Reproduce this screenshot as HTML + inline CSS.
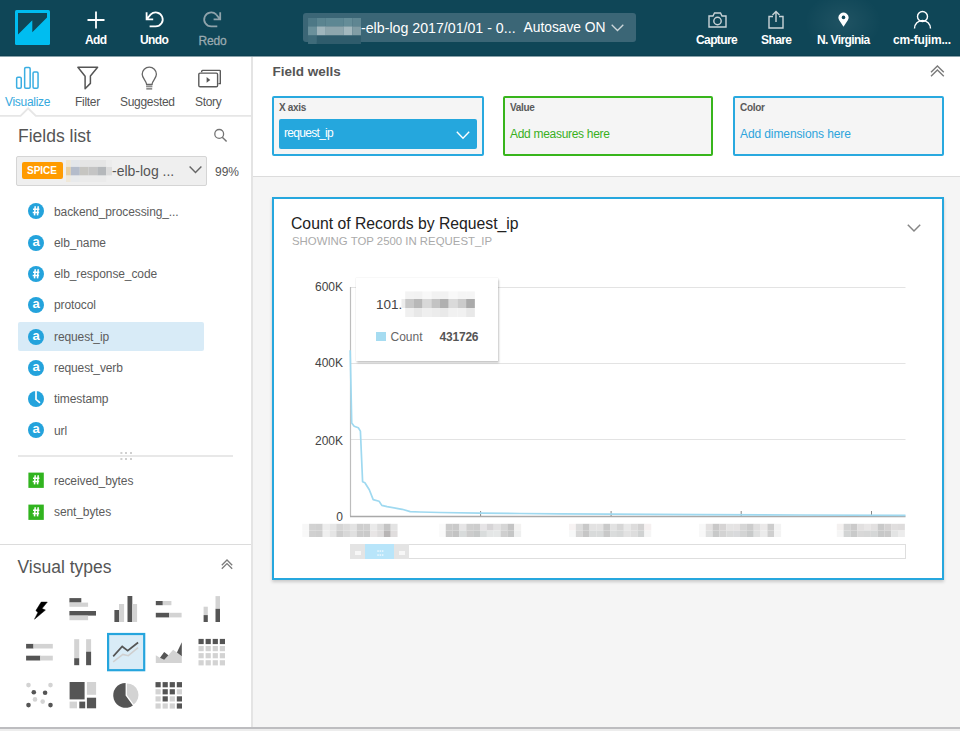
<!DOCTYPE html>
<html><head><meta charset="utf-8">
<style>
*{margin:0;padding:0;box-sizing:border-box}
html,body{width:960px;height:731px;overflow:hidden;background:#f5f5f5;font-family:"Liberation Sans",sans-serif;position:relative}
.a{position:absolute}
.t{position:absolute;white-space:nowrap;line-height:1}
#hdr{left:0;top:0;width:960px;height:56px;background:#0f4657;border-bottom:1px solid #0c4051;box-shadow:0 1px 0 #88a2aa}
.hl{color:#fff;font-weight:bold;font-size:12px;letter-spacing:-0.6px}
#left{left:0;top:57px;width:251px;height:670px;background:#fff}
#lborder{left:251px;top:57px;width:2px;height:670px;background:#e4e4e4}
.tab{color:#555;font-size:12px;letter-spacing:-0.3px}
.fi{left:28px;width:16px;height:16px;border-radius:50%;background:#24a3dc;color:#fff;font-weight:bold;font-size:13px;text-align:center;line-height:14.5px}
.fl{left:54px;color:#5c5c5c;font-size:12px;letter-spacing:-0.1px}
.gi{left:28px;width:16px;height:16px;background:#2cb52a;color:#fff;font-weight:bold;font-size:13px;text-align:center;line-height:14.5px}
#fw{left:253px;top:57px;width:707px;height:120px;background:#fff;border-bottom:1px solid #dcdcdc}
.well{top:96px;height:60px;border:2px solid #29a9df;border-radius:2px;background:#f5f5f5}
.wl{color:#5a5a5a;font-weight:bold;font-size:10px;letter-spacing:-0.3px}
#card{left:272px;top:197px;width:672px;height:383px;background:#fff;border:2px solid #26a7de;box-shadow:0 2px 3px rgba(0,0,0,0.18)}
.ax{color:#444;font-size:12px;text-align:right}
#bot1{left:0;top:727px;width:960px;height:2px;background:#bdbdc0}
#bot2{left:0;top:729px;width:960px;height:2px;background:#ededed}
</style></head><body>
<!-- HEADER -->
<div id="hdr" class="a"></div>
<div class="a" style="left:805px;top:0;width:80px;height:55px;background:radial-gradient(ellipse 38px 30px at 38px 22px,rgba(255,255,255,0.07),rgba(255,255,255,0))"></div>
<svg class="a" style="left:15px;top:10px" width="35" height="35" viewBox="0 0 35 35">
 <rect x="0" y="0" width="35" height="35" rx="1.5" fill="#00bdf0"/>
 <path d="M3 3 H32 V7.5 L17.3 22.3 V10.2 L3 24.5 Z" fill="#0f4657"/>
</svg>
<svg class="a" style="left:87px;top:11px" width="18" height="18" viewBox="0 0 18 18"><path d="M9 0.5V17.5M0.5 9H17.5" stroke="#fff" stroke-width="1.8"/></svg>
<div class="t hl" style="left:85px;top:34px">Add</div>
<svg class="a" style="left:140px;top:6px" width="30" height="26" viewBox="0 0 30 26"><path d="M10.75 8.45 A7 7 0 1 1 15.7 20.4 H9.6 M6.6 6.2 V13.4 H13.2 M6.6 13.4 L10.75 8.45" fill="none" stroke="#fff" stroke-width="1.8"/></svg>
<div class="t hl" style="left:140px;top:34px">Undo</div>
<svg class="a" style="left:198px;top:6px" width="30" height="26" viewBox="0 0 30 26"><path d="M18.15 8.45 A7 7 0 1 0 13.2 20.4 H19.3 M22.2 6.2 V13.4 H15.6 M22.2 13.4 L18.15 8.45" fill="none" stroke="#8fa3ab" stroke-width="1.8"/></svg>
<div class="t" style="left:198.5px;top:34.5px;color:#9aaab0;font-size:12px;-webkit-text-stroke:0.3px #9aaab0;letter-spacing:-0.2px">Redo</div>

<div class="a" style="left:303.3px;top:13px;width:332.4px;height:28.6px;border-radius:3px;background:#3b6676"></div>
<svg class="a" style="left:307.7px;top:17.7px" width="53.2" height="26.2" viewBox="0 0 53.2 26.2">
 <g><rect x="0" y="0" width="8.9" height="8.4" fill="#4d7886"/><rect x="8.9" y="0" width="8.9" height="8.4" fill="#5a8490"/><rect x="17.8" y="0" width="17.6" height="8.4" fill="#5d8793"/><rect x="35.4" y="0" width="8.9" height="8.4" fill="#658d98"/><rect x="44.3" y="0" width="8.9" height="8.4" fill="#5f8692"/>
 <rect x="0" y="8.4" width="8.9" height="9.1" fill="#6a909b"/><rect x="8.9" y="8.4" width="8.9" height="9.1" fill="#9fb5bc"/><rect x="17.8" y="8.4" width="17.6" height="9.1" fill="#8ea6ad"/><rect x="35.4" y="8.4" width="8.9" height="9.1" fill="#a3b8be"/><rect x="44.3" y="8.4" width="8.9" height="9.1" fill="#819da5"/>
 <rect x="0" y="17.5" width="8.9" height="8.7" fill="#3f6b7a"/><rect x="8.9" y="17.5" width="44.3" height="8.7" fill="#2f5c6c"/></g></svg>
<div class="t" style="left:361px;top:21px;color:#fff;font-size:14.2px">-elb-log 2017/01/01 - 0...</div><div class="t" style="left:523.5px;top:21px;color:#fff;font-size:13.8px">Autosave ON</div>
<svg class="a" style="left:610.6px;top:24px" width="13" height="8" viewBox="0 0 13 8"><path d="M0.7 0.7 L6.5 6.5 L12.3 0.7" fill="none" stroke="#cdd7da" stroke-width="1.3"/></svg>

<svg class="a" style="left:708px;top:12px" width="19" height="16" viewBox="0 0 19 16"><path d="M1 4 H5 L6.5 1 H12.5 L14 4 H18 V15 H1 Z" fill="none" stroke="#c9d3d7" stroke-width="1.4"/><circle cx="9.5" cy="9" r="3.7" fill="none" stroke="#c9d3d7" stroke-width="1.4"/></svg>
<div class="t hl" style="left:696px;top:34px">Capture</div>
<svg class="a" style="left:768px;top:10px" width="16" height="19" viewBox="0 0 16 19"><path d="M5 6.5 H1 V18 H15 V6.5 H11" fill="none" stroke="#c9d3d7" stroke-width="1.4"/><path d="M8 1.5 V12 M4.5 5 L8 1.5 L11.5 5" fill="none" stroke="#c9d3d7" stroke-width="1.4"/></svg>
<div class="t hl" style="left:761px;top:34px">Share</div>
<svg class="a" style="left:838px;top:12px" width="11" height="15" viewBox="0 0 11 15"><path d="M5.5 14.8 L1.2 8.2 A5 5 0 1 1 9.8 8.2 Z" fill="#fff"/><circle cx="5.5" cy="5.4" r="1.8" fill="#0f4657"/></svg>
<div class="t hl" style="left:817px;top:34px">N. Virginia</div>
<svg class="a" style="left:913px;top:10px" width="19" height="19" viewBox="0 0 19 19"><circle cx="9.5" cy="6.5" r="5" fill="none" stroke="#fff" stroke-width="1.4"/><path d="M1.5 18.5 A8 8 0 0 1 17.5 18.5" fill="none" stroke="#fff" stroke-width="1.4"/></svg>
<div class="t hl" style="left:893px;top:34px;letter-spacing:-0.2px">cm-fujim...</div>

<!-- LEFT PANEL -->
<div id="left" class="a"></div>
<div id="lborder" class="a"></div>
<svg class="a" style="left:15px;top:66px" width="26" height="24" viewBox="0 0 26 24"><g fill="none" stroke="#3aaee2" stroke-width="1.5"><rect x="1.65" y="11.25" width="4.6" height="11" rx="1.2"/><rect x="9.65" y="1.45" width="5.5" height="20.8" rx="1.2"/><rect x="18.05" y="5.95" width="5" height="16.3" rx="1.2"/></g></svg>
<div class="t tab" style="left:5px;top:96px;color:#35a8dd">Visualize</div>
<svg class="a" style="left:77px;top:66px" width="22" height="25" viewBox="0 0 22 25"><path d="M0.9 1.3 H20.6 L13.4 10 V17.4 L8.1 22.8 V10.2 Z" fill="none" stroke="#555" stroke-width="1.5" stroke-linejoin="round"/></svg>
<div class="t tab" style="left:75px;top:96px">Filter</div>
<svg class="a" style="left:141px;top:66px" width="17" height="25" viewBox="0 0 17 25"><path d="M5.6 18.3 C5.1 14.6 1.2 12 1.2 8.2 A7.1 7.1 0 0 1 15.4 8.2 C15.4 12 11.5 14.6 11 18.3 Z" fill="none" stroke="#666" stroke-width="1.3" stroke-linejoin="round"/><path d="M5.1 18.9 H11.4 M5.1 20.8 H11.4 M5.3 22.9 H11.2" stroke="#666" stroke-width="1.1"/></svg>
<div class="t tab" style="left:120px;top:96px">Suggested</div>
<svg class="a" style="left:197px;top:69px" width="25" height="20" viewBox="0 0 25 20"><rect x="1.8" y="4.1" width="18.8" height="13.6" rx="1.3" fill="none" stroke="#5a5a5a" stroke-width="1.4"/><path d="M4.7 3.3 V2.2 Q4.7 1.4 5.5 1.4 H22.6 Q23.3 1.4 23.3 2.1 V14.6 H21.4" fill="none" stroke="#5a5a5a" stroke-width="1.4"/><path d="M9.6 8 L13.3 10.9 L9.6 13.8 Z" fill="#555"/></svg>
<div class="t tab" style="left:195px;top:96px">Story</div>
<!-- tab line with notch -->
<svg class="a" style="left:0;top:106px" width="251" height="11" viewBox="0 0 251 11"><path d="M0 9.9 H20.6 L28.1 2.4 L35.8 9.9 H251" fill="none" stroke="#e6e6e6" stroke-width="1.9"/></svg>

<div class="t" style="left:18px;top:128px;color:#555;font-size:17.5px">Fields list</div>
<svg class="a" style="left:213px;top:128px" width="16" height="16" viewBox="0 0 16 16"><circle cx="6.2" cy="5.9" r="4.4" fill="none" stroke="#747474" stroke-width="1.3"/><path d="M9.3 9.2 L13.6 13.5" stroke="#747474" stroke-width="1.5"/></svg>

<div class="a" style="left:16px;top:155.5px;width:191px;height:30px;background:#efefef;border:1px solid #d5d5d5;border-radius:2px"></div>
<div class="a" style="left:22px;top:161.5px;width:41px;height:17.5px;background:#ff9b00;border-radius:2px"></div>
<div class="t" style="left:27px;top:166px;color:#fff;font-weight:bold;font-size:10px">SPICE</div>
<svg class="a" style="left:65.6px;top:160.3px" width="46.3" height="22.2" viewBox="0 0 46.3 22.2">
 <rect x="0" y="0" width="4.7" height="6.9" fill="#f0e6d0"/><rect x="4.7" y="0" width="9.1" height="6.9" fill="#e3e6ea"/><rect x="13.8" y="0" width="26.5" height="6.9" fill="#e5e5e5"/><rect x="40.3" y="0" width="6" height="6.9" fill="#ececec"/>
 <rect x="0" y="6.9" width="4.7" height="8.7" fill="#e8cfa0"/><rect x="4.7" y="6.9" width="9.1" height="8.7" fill="#b4bccb"/><rect x="13.8" y="6.9" width="8.7" height="8.7" fill="#c6c5c1"/><rect x="22.5" y="6.9" width="8.8" height="8.7" fill="#c4c4c4"/><rect x="31.3" y="6.9" width="9" height="8.7" fill="#b5b8bb"/><rect x="40.3" y="6.9" width="6" height="8.7" fill="#dcdcdc"/>
 <rect x="0" y="15.6" width="4.7" height="6.6" fill="#f0e8d8"/><rect x="4.7" y="15.6" width="9.1" height="6.6" fill="#e8eaec"/><rect x="13.8" y="15.6" width="26.5" height="6.6" fill="#ebebeb"/><rect x="40.3" y="15.6" width="6" height="6.6" fill="#efefef"/>
</svg>
<div class="t" style="left:112px;top:164px;color:#555;font-size:14px">-elb-log ...</div>
<svg class="a" style="left:189px;top:166px" width="13" height="8" viewBox="0 0 13 8"><path d="M0.6 0.6 L6.5 6.6 L12.4 0.6" fill="none" stroke="#666" stroke-width="1.4"/></svg>
<div class="t" style="left:215px;top:166px;color:#555;font-size:12px">99%</div>

<!-- fields -->
<svg class="a" style="left:28px;top:203px" width="16" height="16" viewBox="0 0 16 16"><circle cx="8" cy="8" r="8" fill="#24a3dc"/><path d="M7.2 3.2 L6.5 12.4 M10.2 3.2 L9.5 12.4 M5 6.3 H11.4 M4.7 9.4 H11.1" stroke="#fff" stroke-width="1.55" fill="none"/></svg><div class="t fl" style="top:206px">backend_processing_...</div>
<div class="t fi" style="top:234.5px">a</div><div class="t fl" style="top:237px">elb_name</div>
<svg class="a" style="left:28px;top:266px" width="16" height="16" viewBox="0 0 16 16"><circle cx="8" cy="8" r="8" fill="#24a3dc"/><path d="M7.2 3.2 L6.5 12.4 M10.2 3.2 L9.5 12.4 M5 6.3 H11.4 M4.7 9.4 H11.1" stroke="#fff" stroke-width="1.55" fill="none"/></svg><div class="t fl" style="top:268px">elb_response_code</div>
<div class="t fi" style="top:297px">a</div><div class="t fl" style="top:299px">protocol</div>
<div class="a" style="left:18px;top:322px;width:186px;height:29px;background:#d8ebf7;border-radius:2px"></div>
<div class="t fi" style="top:328.5px">a</div><div class="t fl" style="top:331px">request_ip</div>
<div class="t fi" style="top:359.5px">a</div><div class="t fl" style="top:362px">request_verb</div>
<svg class="a" style="left:28px;top:391px" width="16" height="16" viewBox="0 0 16 16"><circle cx="8" cy="8" r="8" fill="#24a3dc"/><path d="M8 0 V8.3 L12 11.8" fill="none" stroke="#fff" stroke-width="1.7"/></svg>
<div class="t fl" style="top:393px">timestamp</div>
<div class="t fi" style="top:422px">a</div><div class="t fl" style="top:425px">url</div>
<div class="a" style="left:18px;top:455px;width:215px;height:2px;background:#e8e8e8"></div>
<svg class="a" style="left:119px;top:451px" width="14" height="10" viewBox="0 0 14 10"><rect x="1.4" y="1" width="2" height="2" fill="#cfcfcf"/><rect x="1.4" y="7" width="2" height="2" fill="#cfcfcf"/><rect x="6" y="1" width="2" height="2" fill="#cfcfcf"/><rect x="6" y="7" width="2" height="2" fill="#cfcfcf"/><rect x="11" y="1" width="2" height="2" fill="#cfcfcf"/><rect x="11" y="7" width="2" height="2" fill="#cfcfcf"/></svg>
<svg class="a" style="left:28px;top:472px" width="16" height="16" viewBox="0 0 16 16"><rect x="0.4" y="0.6" width="15.4" height="15.3" fill="#31b41f"/><path d="M7.2 3.2 L6.5 12.4 M10.2 3.2 L9.5 12.4 M5 6.3 H11.4 M4.7 9.4 H11.1" stroke="#fff" stroke-width="1.55" fill="none"/></svg><div class="t fl" style="top:475px">received_bytes</div>
<svg class="a" style="left:28px;top:503.5px" width="16" height="16" viewBox="0 0 16 16"><rect x="0.4" y="0.6" width="15.4" height="15.3" fill="#31b41f"/><path d="M7.2 3.2 L6.5 12.4 M10.2 3.2 L9.5 12.4 M5 6.3 H11.4 M4.7 9.4 H11.1" stroke="#fff" stroke-width="1.55" fill="none"/></svg><div class="t fl" style="top:506px">sent_bytes</div>

<div class="a" style="left:0;top:544px;width:251px;height:1px;background:#dcdcdc"></div>
<div class="t" style="left:17.5px;top:559px;color:#555;font-size:17.5px">Visual types</div>
<svg class="a" style="left:221px;top:559px" width="13" height="11" viewBox="0 0 13 11"><path d="M0.8 6.2 L6 1 L11.2 6.2 M0.8 9.8 L6 4.6 L11.2 9.8" fill="none" stroke="#7a7a7a" stroke-width="1.3"/></svg>

<!-- visual type icons -->
<svg class="a" style="left:0;top:590px" width="251" height="130" viewBox="0 590 251 130">
 <!-- row1 -->
 <path d="M41.2 602.1 H47.3 L42 608.6 L45.4 610.1 L34.5 619.2 L37.9 612.4 L35.9 610.6 Z" fill="#000" stroke="#000" stroke-width="0.5" stroke-linejoin="round"/>
 <rect x="69.4" y="598.1" width="11.9" height="4.4" fill="#555"/>
 <rect x="69.4" y="602.6" width="18.7" height="4.2" fill="#d3d3d3"/>
 <rect x="69.4" y="611" width="26.6" height="4.6" fill="#555"/>
 <rect x="69.4" y="615.6" width="18.7" height="4.6" fill="#d3d3d3"/>
 <rect x="114.4" y="610" width="4.6" height="12" fill="#555"/>
 <rect x="119" y="604" width="5.1" height="18" fill="#d3d3d3"/>
 <rect x="127.5" y="596" width="4.8" height="26" fill="#555"/>
 <rect x="132.3" y="604" width="4.8" height="18" fill="#d3d3d3"/>
 <rect x="155.8" y="601" width="7" height="4.2" fill="#555"/>
 <rect x="162.8" y="601" width="8.6" height="4.2" fill="#d3d3d3"/>
 <rect x="155.8" y="612.8" width="13.4" height="4.6" fill="#555"/>
 <rect x="169.2" y="612.8" width="12.4" height="4.6" fill="#d3d3d3"/>
 <rect x="203.6" y="606.7" width="4.2" height="8.4" fill="#d3d3d3"/>
 <rect x="203.6" y="615.1" width="4.2" height="6.9" fill="#555"/>
 <rect x="215.5" y="596.1" width="4.5" height="12.7" fill="#d3d3d3"/>
 <rect x="215.5" y="608.8" width="4.5" height="13.2" fill="#555"/>
 <!-- row2 -->
 <rect x="26.1" y="643.9" width="7.4" height="4.6" fill="#555"/>
 <rect x="33.5" y="643.9" width="19.3" height="4.6" fill="#d3d3d3"/>
 <rect x="26.1" y="655.7" width="14.2" height="4.8" fill="#555"/>
 <rect x="40.3" y="655.7" width="12.5" height="4.8" fill="#d3d3d3"/>
 <rect x="74.2" y="639.2" width="5" height="19" fill="#d3d3d3"/>
 <rect x="74.2" y="658.2" width="5" height="7" fill="#555"/>
 <rect x="86.1" y="639.2" width="5" height="12.5" fill="#d3d3d3"/>
 <rect x="86.1" y="651.7" width="5" height="13.5" fill="#555"/>
 <rect x="108.1" y="634" width="36.1" height="36.2" fill="#d9ecf7" stroke="#25a5dd" stroke-width="2.2"/>
 <path d="M113.2 661.8 L122.9 654.4 L128.3 655.7 L138.1 647.6" fill="none" stroke="#cfcfcf" stroke-width="1.5"/>
 <path d="M113.2 656.4 L122.2 646.5 L127.7 650.6 L138.1 642.5" fill="none" stroke="#555" stroke-width="1.7"/>
 <path d="M155.8 663 V655.3 L160 657.7 L168.4 655.3 L173.1 649.7 L176.9 652.5 L181.8 656.3 V663 Z" fill="#d3d3d3"/>
 <path d="M160 657.7 L164.2 652 L168.4 655.3 L164.2 659.8 Z" fill="#555"/>
 <path d="M176.9 652.5 L181.8 642.2 V656.3 Z" fill="#555"/>
 <rect x="198.50" y="638.90" width="5.2" height="5.2" fill="#555"/><rect x="205.60" y="638.90" width="5.2" height="5.2" fill="#555"/><rect x="212.70" y="638.90" width="5.2" height="5.2" fill="#555"/><rect x="219.80" y="638.90" width="5.2" height="5.2" fill="#555"/><rect x="198.50" y="646.00" width="5.2" height="5.2" fill="#d3d3d3"/><rect x="205.60" y="646.00" width="5.2" height="5.2" fill="#d3d3d3"/><rect x="212.70" y="646.00" width="5.2" height="5.2" fill="#d3d3d3"/><rect x="219.80" y="646.00" width="5.2" height="5.2" fill="#d3d3d3"/><rect x="198.50" y="653.10" width="5.2" height="5.2" fill="#d3d3d3"/><rect x="205.60" y="653.10" width="5.2" height="5.2" fill="#d3d3d3"/><rect x="212.70" y="653.10" width="5.2" height="5.2" fill="#d3d3d3"/><rect x="219.80" y="653.10" width="5.2" height="5.2" fill="#d3d3d3"/><rect x="198.50" y="660.20" width="5.2" height="5.2" fill="#d3d3d3"/><rect x="205.60" y="660.20" width="5.2" height="5.2" fill="#d3d3d3"/><rect x="212.70" y="660.20" width="5.2" height="5.2" fill="#d3d3d3"/><rect x="219.80" y="660.20" width="5.2" height="5.2" fill="#d3d3d3"/>
 <!-- row3 -->
 <g fill="#d3d3d3"><circle cx="28.5" cy="685.1" r="2.3"/><circle cx="50.5" cy="685.1" r="2.3"/><circle cx="35" cy="699.4" r="2.3"/><circle cx="42.7" cy="701.6" r="2.3"/></g>
 <g fill="#555"><circle cx="33.8" cy="692.2" r="2.3"/><circle cx="45.1" cy="692.7" r="2.3"/><circle cx="28.5" cy="705.1" r="2.3"/><circle cx="50.5" cy="705.1" r="2.3"/></g>
 <rect x="69.6" y="682" width="15" height="17.4" fill="#555"/>
 <rect x="86.9" y="682" width="9.2" height="12.8" fill="#d3d3d3"/>
 <rect x="86.9" y="697.7" width="9.2" height="10.6" fill="#555"/>
 <rect x="69.6" y="701.6" width="7.4" height="6.7" fill="#d3d3d3"/>
 <rect x="79.3" y="701.6" width="5.9" height="6.7" fill="#555"/>
 <path d="M125.6 695.4 L132.89 705.43 A12.4 12.4 0 1 1 125.6 683.00 Z" fill="#555"/>
 <path d="M126.90 695.00 L126.90 683.40 A11.6 11.6 0 0 1 133.72 704.38 Z" fill="#d3d3d3"/>
 <g id="hm"></g>
</svg>
<svg class="a" style="left:155px;top:681.8px" width="28" height="28" viewBox="0 0 28 28"><rect x="0.50" y="0.10" width="5.2" height="5.2" fill="#555"/><rect x="7.60" y="0.10" width="5.2" height="5.2" fill="#555"/><rect x="14.70" y="0.10" width="5.2" height="5.2" fill="#555"/><rect x="21.80" y="0.10" width="5.2" height="5.2" fill="#555"/><rect x="0.50" y="7.20" width="5.2" height="5.2" fill="#d3d3d3"/><rect x="7.60" y="7.20" width="5.2" height="5.2" fill="#555"/><rect x="14.70" y="7.20" width="5.2" height="5.2" fill="#555"/><rect x="21.80" y="7.20" width="5.2" height="5.2" fill="#d3d3d3"/><rect x="0.50" y="14.30" width="5.2" height="5.2" fill="#d3d3d3"/><rect x="7.60" y="14.30" width="5.2" height="5.2" fill="#555"/><rect x="14.70" y="14.30" width="5.2" height="5.2" fill="#d3d3d3"/><rect x="21.80" y="14.30" width="5.2" height="5.2" fill="#555"/><rect x="0.50" y="21.40" width="5.2" height="5.2" fill="#d3d3d3"/><rect x="7.60" y="21.40" width="5.2" height="5.2" fill="#d3d3d3"/><rect x="14.70" y="21.40" width="5.2" height="5.2" fill="#d3d3d3"/><rect x="21.80" y="21.40" width="5.2" height="5.2" fill="#555"/></svg>

<!-- FIELD WELLS -->
<div id="fw" class="a"></div>
<div class="t" style="left:272.5px;top:65px;color:#555;font-weight:bold;font-size:13.5px">Field wells</div>
<svg class="a" style="left:930px;top:65px" width="15" height="12" viewBox="0 0 15 12"><path d="M1 7.2 L7.4 1 L13.8 7.2 M1 11.2 L7.4 5 L13.8 11.2" fill="none" stroke="#7a7a7a" stroke-width="1.4"/></svg>
<div class="a well" style="left:272px;width:211.5px"></div>
<div class="t wl" style="left:279px;top:103px">X axis</div>
<div class="a" style="left:279px;top:119px;width:198px;height:30px;background:#25a7dd;border-radius:2px"></div>
<div class="t" style="left:284px;top:127.3px;color:#fff;font-size:12px;letter-spacing:-0.7px">request_ip</div>
<svg class="a" style="left:456px;top:131px" width="14" height="9" viewBox="0 0 14 9"><path d="M0.8 0.8 L7 7.2 L13.2 0.8" fill="none" stroke="#fff" stroke-width="1.4"/></svg>
<div class="a well" style="left:503px;width:210px;border-color:#38b51c"></div>
<div class="t wl" style="left:510px;top:103px">Value</div>
<div class="t" style="left:510px;top:128px;color:#38b01d;font-size:12px;letter-spacing:-0.3px">Add measures here</div>
<div class="a well" style="left:733px;width:211px"></div>
<div class="t wl" style="left:740px;top:103px">Color</div>
<div class="t" style="left:740px;top:128px;color:#2da4dc;font-size:12px;letter-spacing:-0.1px">Add dimensions here</div>

<!-- CHART CARD -->
<div id="card" class="a"></div>
<div class="t" style="left:291px;top:216px;color:#222;font-size:15.75px">Count of Records by Request_ip</div>
<div class="t" style="left:292px;top:236px;color:#aaa;font-size:11.4px">SHOWING TOP 2500 IN REQUEST_IP</div>
<svg class="a" style="left:906.7px;top:223.5px" width="14" height="9" viewBox="0 0 14 9"><path d="M0.8 0.8 L7 7 L13.2 0.8" fill="none" stroke="#858585" stroke-width="1.5"/></svg>

<svg class="a" style="left:272px;top:197px" width="672" height="383" viewBox="272 197 672 383">
 <g stroke="#e3e3e3" stroke-width="1"><path d="M351 287.5 H905.5 M351 363.5 H905.5 M351 439.5 H905.5"/></g>
 <path d="M350.5 287 V516" stroke="#bdbdbd" stroke-width="1.2"/>
 <path d="M350 516.5 H905.5" stroke="#a9a9a9" stroke-width="1.4"/>
 <g stroke="#888" stroke-width="1"><path d="M480.6 511 V516 M611.1 511 V516 M741.2 511 V516 M871.5 511 V516"/></g>
 <path d="M350.2 350.2 L351.7 422.9 L354.2 426.2 L358.3 427.8 L360.4 431.1 L362.6 481.8 L364.9 482.7 L369.3 489.8 L373.2 499.6 L379.1 501.3 L381.8 505.4 L387.1 506.7 L402.2 509.3 L410.2 511.6 L420 512 L440 512.5 L480 513.2 L520 513.5 L560 513.8 L611 514.2 L700 514.6 L800 515 L905.5 515.3" fill="none" stroke="#9fd9f0" stroke-width="1.7" stroke-linejoin="round"/>
</svg>
<div class="t ax" style="left:300px;top:281px;width:43px">600K</div>
<div class="t ax" style="left:300px;top:357px;width:43px">400K</div>
<div class="t ax" style="left:300px;top:435px;width:43px">200K</div>
<div class="t ax" style="left:300px;top:511px;width:43px">0</div>

<!-- tooltip -->
<div class="a" style="left:356px;top:278px;width:142px;height:83px;background:#fff;box-shadow:0 0 1px rgba(0,0,0,0.18),1px 1.5px 2px rgba(0,0,0,0.2)"></div>
<div class="t" style="left:376px;top:298px;color:#444;font-size:13.5px">101.</div>
<svg class="a" style="left:400px;top:290px" width="82" height="28" viewBox="400 290 82 28"><rect x="401.5" y="299" width="3.7" height="9" fill="#ececec"/><rect x="405.20" y="291.4" width="8.75" height="7.6" fill="#f3f3f3"/><rect x="405.20" y="299" width="8.75" height="9" fill="#c8c8c8"/><rect x="405.20" y="308" width="8.75" height="9" fill="#f0f0f0"/><rect x="413.90" y="291.4" width="8.75" height="7.6" fill="#f2f2f2"/><rect x="413.90" y="299" width="8.75" height="9" fill="#b8b8b8"/><rect x="413.90" y="308" width="8.75" height="9" fill="#e8e8e8"/><rect x="422.60" y="291.4" width="8.75" height="7.6" fill="#f8f8f8"/><rect x="422.60" y="299" width="8.75" height="9" fill="#d8d8d8"/><rect x="422.60" y="308" width="8.75" height="9" fill="#efefef"/><rect x="431.30" y="291.4" width="8.75" height="7.6" fill="#f2f2f2"/><rect x="431.30" y="299" width="8.75" height="9" fill="#c3c3c3"/><rect x="431.30" y="308" width="8.75" height="9" fill="#ececec"/><rect x="440.00" y="291.4" width="8.75" height="7.6" fill="#f2f2f2"/><rect x="440.00" y="299" width="8.75" height="9" fill="#b0b0b0"/><rect x="440.00" y="308" width="8.75" height="9" fill="#e9e9e9"/><rect x="448.70" y="291.4" width="8.75" height="7.6" fill="#f9f9f9"/><rect x="448.70" y="299" width="8.75" height="9" fill="#dadada"/><rect x="448.70" y="308" width="8.75" height="9" fill="#f1f1f1"/><rect x="457.40" y="291.4" width="8.75" height="7.6" fill="#f5f5f5"/><rect x="457.40" y="299" width="8.75" height="9" fill="#cbcbcb"/><rect x="457.40" y="308" width="8.75" height="9" fill="#f1f1f1"/><rect x="466.10" y="291.4" width="8.75" height="7.6" fill="#f5f5f5"/><rect x="466.10" y="299" width="8.75" height="9" fill="#aaaaaa"/><rect x="466.10" y="308" width="8.75" height="9" fill="#e8e8e8"/></svg>
<div class="a" style="left:376px;top:331.5px;width:9.5px;height:9px;background:#a6dcf1"></div>
<div class="t" style="left:390.5px;top:331px;color:#666;font-size:12px">Count</div>
<div class="t" style="left:439.5px;top:331px;color:#555;font-weight:bold;font-size:12px;letter-spacing:-0.2px">431726</div>

<!-- x labels pixelated -->
<svg class="a" style="left:300px;top:522px" width="610" height="17" viewBox="300 522 610 17">
<rect x="302.30" y="523.8" width="6.85" height="6.7" fill="#f7f7f7"/><rect x="302.30" y="530.5" width="6.85" height="6.5" fill="#f8f8f8"/>
<rect x="309.10" y="523.8" width="6.85" height="6.7" fill="#d2d2d2"/><rect x="309.10" y="530.5" width="6.85" height="6.5" fill="#d0d0d0"/>
<rect x="315.90" y="523.8" width="6.85" height="6.7" fill="#d0d0d0"/><rect x="315.90" y="530.5" width="6.85" height="6.5" fill="#cecece"/>
<rect x="322.70" y="523.8" width="6.85" height="6.7" fill="#ededed"/><rect x="322.70" y="530.5" width="6.85" height="6.5" fill="#efefef"/>
<rect x="329.50" y="523.8" width="6.85" height="6.7" fill="#e6e6e6"/><rect x="329.50" y="530.5" width="6.85" height="6.5" fill="#e5e5e5"/>
<rect x="336.30" y="523.8" width="6.85" height="6.7" fill="#d5d5d5"/><rect x="336.30" y="530.5" width="6.85" height="6.5" fill="#cdcdcd"/>
<rect x="343.10" y="523.8" width="6.85" height="6.7" fill="#dcdcdc"/><rect x="343.10" y="530.5" width="6.85" height="6.5" fill="#d8d8d8"/>
<rect x="349.90" y="523.8" width="6.85" height="6.7" fill="#e3e3e3"/><rect x="349.90" y="530.5" width="6.85" height="6.5" fill="#e0e0e0"/>
<rect x="356.70" y="523.8" width="6.85" height="6.7" fill="#cecece"/><rect x="356.70" y="530.5" width="6.85" height="6.5" fill="#cbcbcb"/>
<rect x="363.50" y="523.8" width="6.85" height="6.7" fill="#cfcfcf"/><rect x="363.50" y="530.5" width="6.85" height="6.5" fill="#cacaca"/>
<rect x="370.30" y="523.8" width="6.85" height="6.7" fill="#eaeaea"/><rect x="370.30" y="530.5" width="6.85" height="6.5" fill="#e8e5e5"/>
<rect x="377.10" y="523.8" width="6.85" height="6.7" fill="#dcdcdc"/><rect x="377.10" y="530.5" width="6.85" height="6.5" fill="#dedcdc"/>
<rect x="383.90" y="523.8" width="6.85" height="6.7" fill="#c4c4c4"/><rect x="383.90" y="530.5" width="6.85" height="6.5" fill="#b8b5b5"/>
<rect x="390.70" y="523.8" width="6.85" height="6.7" fill="#e3e3e3"/><rect x="390.70" y="530.5" width="6.85" height="6.5" fill="#e0dddd"/>
<rect x="438.90" y="523.8" width="6.90" height="6.7" fill="#fafafa"/><rect x="438.90" y="530.5" width="6.90" height="6.5" fill="#fafafa"/>
<rect x="445.75" y="523.8" width="6.90" height="6.7" fill="#cbcbcb"/><rect x="445.75" y="530.5" width="6.90" height="6.5" fill="#c8c8c8"/>
<rect x="452.60" y="523.8" width="6.90" height="6.7" fill="#c9c9c9"/><rect x="452.60" y="530.5" width="6.90" height="6.5" fill="#c3c3c3"/>
<rect x="459.45" y="523.8" width="6.90" height="6.7" fill="#e6e5e6"/><rect x="459.45" y="530.5" width="6.90" height="6.5" fill="#d8dbdb"/>
<rect x="466.30" y="523.8" width="6.90" height="6.7" fill="#cfcfcf"/><rect x="466.30" y="530.5" width="6.90" height="6.5" fill="#cccccc"/>
<rect x="473.15" y="523.8" width="6.90" height="6.7" fill="#cdcdcd"/><rect x="473.15" y="530.5" width="6.90" height="6.5" fill="#c6c8c8"/>
<rect x="480.00" y="523.8" width="6.90" height="6.7" fill="#e6e4e6"/><rect x="480.00" y="530.5" width="6.90" height="6.5" fill="#d9dcdc"/>
<rect x="486.85" y="523.8" width="6.90" height="6.7" fill="#d6d4d6"/><rect x="486.85" y="530.5" width="6.90" height="6.5" fill="#e4e6e6"/>
<rect x="493.70" y="523.8" width="6.90" height="6.7" fill="#e2e1e2"/><rect x="493.70" y="530.5" width="6.90" height="6.5" fill="#e5e7e7"/>
<rect x="500.55" y="523.8" width="6.90" height="6.7" fill="#d6d6d6"/><rect x="500.55" y="530.5" width="6.90" height="6.5" fill="#cfcfcf"/>
<rect x="507.40" y="523.8" width="6.90" height="6.7" fill="#c4c4c4"/><rect x="507.40" y="530.5" width="6.90" height="6.5" fill="#c5c6c6"/>
<rect x="514.25" y="523.8" width="6.90" height="6.7" fill="#f3f2f1"/><rect x="514.25" y="530.5" width="6.90" height="6.5" fill="#eeefef"/>
<rect x="569.00" y="523.8" width="6.90" height="6.7" fill="#f7f3f3"/><rect x="569.00" y="530.5" width="6.90" height="6.5" fill="#f7f8f8"/>
<rect x="575.85" y="523.8" width="6.90" height="6.7" fill="#dcdcdc"/><rect x="575.85" y="530.5" width="6.90" height="6.5" fill="#d6d6d6"/>
<rect x="582.70" y="523.8" width="6.90" height="6.7" fill="#c8c8c8"/><rect x="582.70" y="530.5" width="6.90" height="6.5" fill="#c6c6c6"/>
<rect x="589.55" y="523.8" width="6.90" height="6.7" fill="#e3e2e2"/><rect x="589.55" y="530.5" width="6.90" height="6.5" fill="#d8dada"/>
<rect x="596.40" y="523.8" width="6.90" height="6.7" fill="#e3e2e2"/><rect x="596.40" y="530.5" width="6.90" height="6.5" fill="#d8dada"/>
<rect x="603.25" y="523.8" width="6.90" height="6.7" fill="#c9c9c9"/><rect x="603.25" y="530.5" width="6.90" height="6.5" fill="#c8c8c8"/>
<rect x="610.10" y="523.8" width="6.90" height="6.7" fill="#e2e2e2"/><rect x="610.10" y="530.5" width="6.90" height="6.5" fill="#dadcdc"/>
<rect x="616.95" y="523.8" width="6.90" height="6.7" fill="#d6d6d6"/><rect x="616.95" y="530.5" width="6.90" height="6.5" fill="#d6d8d8"/>
<rect x="623.80" y="523.8" width="6.90" height="6.7" fill="#e8e8e8"/><rect x="623.80" y="530.5" width="6.90" height="6.5" fill="#e2e2e2"/>
<rect x="630.65" y="523.8" width="6.90" height="6.7" fill="#dddcdc"/><rect x="630.65" y="530.5" width="6.90" height="6.5" fill="#dddddd"/>
<rect x="637.50" y="523.8" width="6.90" height="6.7" fill="#d2d1d1"/><rect x="637.50" y="530.5" width="6.90" height="6.5" fill="#d0d2d2"/>
<rect x="644.35" y="523.8" width="6.90" height="6.7" fill="#f5f0f0"/><rect x="644.35" y="530.5" width="6.90" height="6.5" fill="#f5f5f5"/>
<rect x="698.90" y="523.8" width="6.90" height="6.7" fill="#f8f8f8"/><rect x="698.90" y="530.5" width="6.90" height="6.5" fill="#f8f8f8"/>
<rect x="705.75" y="523.8" width="6.90" height="6.7" fill="#e3e1e1"/><rect x="705.75" y="530.5" width="6.90" height="6.5" fill="#dfe0e0"/>
<rect x="712.60" y="523.8" width="6.90" height="6.7" fill="#c9c8c8"/><rect x="712.60" y="530.5" width="6.90" height="6.5" fill="#c8c9c9"/>
<rect x="719.45" y="523.8" width="6.90" height="6.7" fill="#d6d4d4"/><rect x="719.45" y="530.5" width="6.90" height="6.5" fill="#d3d3d3"/>
<rect x="726.30" y="523.8" width="6.90" height="6.7" fill="#e5e4e4"/><rect x="726.30" y="530.5" width="6.90" height="6.5" fill="#d9dada"/>
<rect x="733.15" y="523.8" width="6.90" height="6.7" fill="#e5e3e3"/><rect x="733.15" y="530.5" width="6.90" height="6.5" fill="#d9dadc"/>
<rect x="740.00" y="523.8" width="6.90" height="6.7" fill="#d6d6d6"/><rect x="740.00" y="530.5" width="6.90" height="6.5" fill="#d3d4d4"/>
<rect x="746.85" y="523.8" width="6.90" height="6.7" fill="#cccccc"/><rect x="746.85" y="530.5" width="6.90" height="6.5" fill="#c8caca"/>
<rect x="753.70" y="523.8" width="6.90" height="6.7" fill="#e0dfdf"/><rect x="753.70" y="530.5" width="6.90" height="6.5" fill="#dfe0e0"/>
<rect x="760.55" y="523.8" width="6.90" height="6.7" fill="#ebe9e9"/><rect x="760.55" y="530.5" width="6.90" height="6.5" fill="#ebebeb"/>
<rect x="767.40" y="523.8" width="6.90" height="6.7" fill="#cdcdcd"/><rect x="767.40" y="530.5" width="6.90" height="6.5" fill="#cfcfcf"/>
<rect x="774.25" y="523.8" width="6.90" height="6.7" fill="#f3f3f3"/><rect x="774.25" y="530.5" width="6.90" height="6.5" fill="#f3f3f3"/>
<rect x="836.80" y="523.8" width="6.85" height="6.7" fill="#f4f1f0"/><rect x="836.80" y="530.5" width="6.85" height="6.5" fill="#f5f5f5"/>
<rect x="843.60" y="523.8" width="6.85" height="6.7" fill="#d3d3d3"/><rect x="843.60" y="530.5" width="6.85" height="6.5" fill="#d2d4d4"/>
<rect x="850.40" y="523.8" width="6.85" height="6.7" fill="#cbcaca"/><rect x="850.40" y="530.5" width="6.85" height="6.5" fill="#c9caca"/>
<rect x="857.20" y="523.8" width="6.85" height="6.7" fill="#e2e0e0"/><rect x="857.20" y="530.5" width="6.85" height="6.5" fill="#d8d8d8"/>
<rect x="864.00" y="523.8" width="6.85" height="6.7" fill="#e8e6e6"/><rect x="864.00" y="530.5" width="6.85" height="6.5" fill="#d6d7d7"/>
<rect x="870.80" y="523.8" width="6.85" height="6.7" fill="#e2e0e0"/><rect x="870.80" y="530.5" width="6.85" height="6.5" fill="#d5d7d7"/>
<rect x="877.60" y="523.8" width="6.85" height="6.7" fill="#c9c9c9"/><rect x="877.60" y="530.5" width="6.85" height="6.5" fill="#c7c8c8"/>
<rect x="884.40" y="523.8" width="6.85" height="6.7" fill="#d4d2d2"/><rect x="884.40" y="530.5" width="6.85" height="6.5" fill="#c9c9c9"/>
<rect x="891.20" y="523.8" width="6.85" height="6.7" fill="#e0dede"/><rect x="891.20" y="530.5" width="6.85" height="6.5" fill="#e3e4e4"/>
<rect x="898.00" y="523.8" width="6.85" height="6.7" fill="#dedcdc"/><rect x="898.00" y="530.5" width="6.85" height="6.5" fill="#ececec"/>
</svg>
<!-- range slider -->
<div class="a" style="left:350px;top:544px;width:556px;height:15px;border:1px solid #dedede;background:#fff"></div>
<div class="a" style="left:350px;top:544px;width:15.5px;height:15px;background:#e4e4e4"></div>
<div class="a" style="left:365px;top:544px;width:29.2px;height:15px;background:#b8e5fa"></div>
<div class="a" style="left:394.2px;top:544px;width:14.8px;height:15px;background:#e4e4e4"></div>
<div class="a" style="left:354.5px;top:551px;width:6.4px;height:4px;background:#f7f7f7"></div>
<div class="a" style="left:398.5px;top:551px;width:6.4px;height:4px;background:#f7f7f7"></div>
<svg class="a" style="left:376.5px;top:550px" width="7" height="6" viewBox="0 0 7 6"><g fill="#f4fbff"><rect x="0.3" y="0.4" width="1.5" height="1.3"/><rect x="2.6" y="0.4" width="1.5" height="1.3"/><rect x="4.9" y="0.4" width="1.5" height="1.3"/><rect x="0.3" y="4.4" width="1.5" height="1.3"/><rect x="2.6" y="4.4" width="1.5" height="1.3"/><rect x="4.9" y="4.4" width="1.5" height="1.3"/></g></svg>

<div id="bot1" class="a"></div>
<div id="bot2" class="a"></div>
</body></html>
